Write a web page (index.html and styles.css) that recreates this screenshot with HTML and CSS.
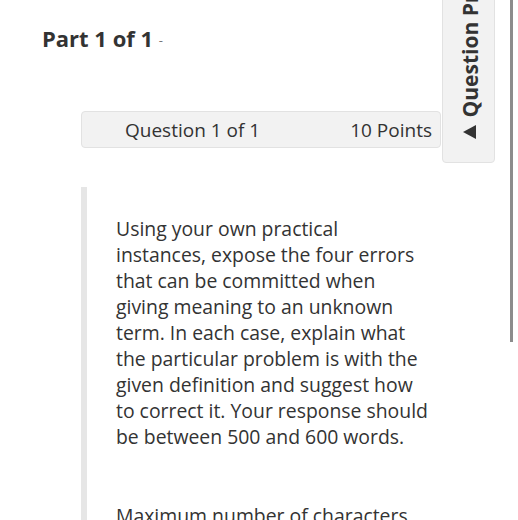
FILE: index.html
```html
<!DOCTYPE html>
<html lang="en">
<head>
<meta charset="utf-8">
<title>Part 1 of 1</title>
<link rel="stylesheet" href="styles.css">
</head>
<body>
<main class="page">
  <h1 class="part-title">Part 1 of 1 <span class="part-dash">-</span></h1>
  <div class="question-header">
    <span class="q-label">Question 1 of 1</span>
    <span class="q-points">10 Points</span>
  </div>
  <section class="question-body">
    <p class="q-text">Using your own practical instances, expose the four errors that can be committed when giving meaning to an unknown term. In each case, explain what the particular problem is with the given definition and suggest how to correct it. Your response should be between 500 and 600 words.</p>
    <p class="q-text q-max">Maximum number of characters (including HTML tags added by text editor): 32,000</p>
  </section>
</main>
<aside class="side-tab">
  <span class="side-tab-label">Question Properties</span>
  <span class="side-tab-tri"></span>
</aside>
<div class="scrollbar"></div>
</body>
</html>
```

FILE: styles.css
```css
html, body {
  margin: 0;
  padding: 0;
  background: #ffffff;
  overflow: hidden;
}
body {
  font-family: "Open Sans", "Liberation Sans", sans-serif;
  color: #333333;
  width: 518px;
  height: 520px;
  position: relative;
}
.page {
  padding-top: 23px;
}
.part-title {
  margin: 0 0 0 42px;
  font-size: 22px;
  line-height: 30px;
  height: 30px;
  font-weight: 700;
  color: #333333;
}
.part-dash {
  font-size: 13px;
  line-height: 1;
  font-weight: 400;
  color: #777777;
  vertical-align: 2px;
}
.question-header {
  margin: 58px 0 0 81px;
  width: 360px;
  height: 37px;
  box-sizing: border-box;
  background: #f2f2f2;
  border: 1px solid #e2e2e2;
  border-radius: 4px;
  display: flex;
  align-items: center;
  justify-content: space-between;
  padding: 0 8px 0 43px;
  font-size: 19px;
  color: #333333;
}
.question-body {
  margin: 39px 0 0 81px;
  border-left: 6px solid #e6e6e6;
  padding: 29px 0 40px 29px;
}
.q-text {
  margin: 0;
  width: 314px;
  font-size: 19.4px;
  line-height: 26px;
  color: #333333;
}
.q-max {
  margin-top: 53px;
}
.side-tab {
  position: absolute;
  left: 442px;
  top: -2px;
  width: 53px;
  height: 165px;
  box-sizing: border-box;
  background: #f2f2f2;
  border: 1px solid #e2e2e2;
  border-radius: 0 0 4px 4px;
  overflow: hidden;
  display: flex;
  flex-direction: column;
  justify-content: flex-end;
  align-items: center;
  padding-bottom: 23px;
}
.side-tab-label {
  flex-shrink: 0;
  writing-mode: vertical-rl;
  transform: rotate(180deg);
  white-space: nowrap;
  font-size: 21px;
  font-weight: 700;
  color: #333333;
  line-height: 24px;
  margin-bottom: 8px;
  margin-left: 2px;
}
.side-tab-tri {
  flex-shrink: 0;
  width: 0;
  height: 0;
  border-top: 7px solid transparent;
  border-bottom: 7px solid transparent;
  border-right: 13px solid #333333;
  margin-left: 1px;
}
.scrollbar {
  position: absolute;
  left: 510px;
  top: 0;
  width: 3px;
  height: 342px;
  background: #8c8c8c;
}
```
